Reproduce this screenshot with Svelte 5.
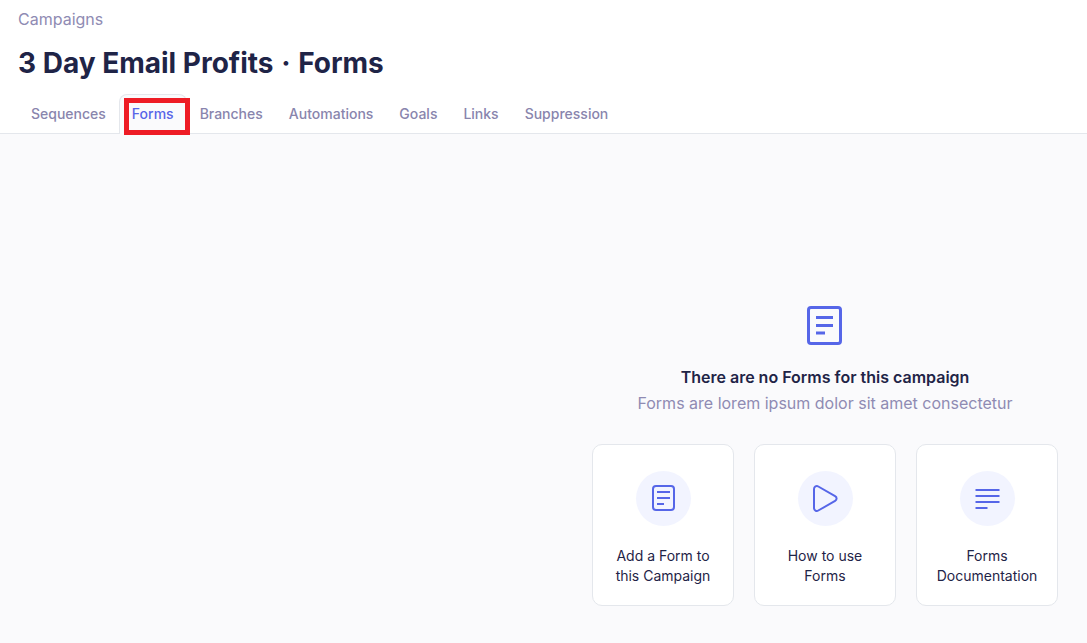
<script lang="ts">
  type Card = { icon: "form" | "play" | "docs"; lines: string[] };

  const tabs = [
    "Sequences",
    "Forms",
    "Branches",
    "Automations",
    "Goals",
    "Links",
    "Suppression",
  ];

  const cards: Card[] = [
    { icon: "form", lines: ["Add a Form to", "this Campaign"] },
    { icon: "play", lines: ["How to use", "Forms"] },
    { icon: "docs", lines: ["Forms", "Documentation"] },
  ];

  let active = $state("Forms");
</script>

<div class="page">
  <header>
    <a class="breadcrumb" href="#campaigns">Campaigns</a>
    <h1>3 Day Email Profits <span class="dot">·</span> Forms</h1>
    <nav>
      {#each tabs as tab}
        <a
          href={"#" + tab.toLowerCase()}
          class="tab"
          class:active={tab === active}
          onclick={() => (active = tab)}
        >
          {tab}
          {#if tab === "Forms"}
            <span class="marker"></span>
          {/if}
        </a>
      {/each}
    </nav>
  </header>

  <main>
    <section class="empty">
      <svg class="empty-icon" width="36" height="39" viewBox="0 0 36 39">
        <rect x="1.5" y="1.5" width="32" height="36" rx="2.5" />
        <path d="M9 11.5h17M9 19.5h17M9 27h9" />
      </svg>
      <h2>There are no Forms for this campaign</h2>
      <p>Forms are lorem ipsum dolor sit amet consectetur</p>

      <div class="cards">
        {#each cards as card}
          <button class="card">
            <span class="circle">
              <svg width="27" height="27" viewBox="0 0 27 27">
                {#if card.icon === "form"}
                  <rect x="3" y="1" width="21" height="24" rx="3" />
                  <path d="M7 7h13M7 13h13M7 19h7" />
                {:else if card.icon === "play"}
                  <path
                    d="M2 4v19c0 2.300 2.400 3.600 4.300 2.500l16.800-9.700c2-1.100 2-3.500 0-4.600L6.300 1.500C4.400.4 2 1.700 2 4z"
                  />
                {:else}
                  <path d="M1.500 5h24M1.500 11h24M1.500 17h24M1.500 23h12" />
                {/if}
              </svg>
            </span>
            <span class="label">
              {card.lines[0]}<br />{card.lines[1]}
            </span>
          </button>
        {/each}
      </div>
    </section>
  </main>
</div>

<style>
  :global(body) {
    margin: 0;
    background: #fafafc;
  }

  .page {
    min-height: 100vh;
    font-family: Inter, sans-serif;
    color: #1f2447;
  }

  header {
    padding: 7px 18px 0;
    background: #fff;
    border-bottom: 1px solid #e4e7ec;
  }

  .breadcrumb {
    display: block;
    width: fit-content;
    font-size: 16px;
    line-height: 24px;
    color: #8f8bb3;
    text-decoration: none;
  }

  h1 {
    margin: 13px 0 12px;
    font-size: 28px;
    line-height: 38px;
    font-weight: 700;
  }

  .dot {
    margin: 0 1px;
  }

  nav {
    display: flex;
    margin-bottom: -1px;
  }

  .tab {
    position: relative;
    padding: 9px 12px 10px;
    border: 1px solid transparent;
    border-bottom: none;
    border-radius: 8px 8px 0 0;
    font-size: 14px;
    line-height: 20px;
    font-weight: 500;
    color: #8985ad;
    text-decoration: none;
  }

  .tab.active {
    background: #fafafc;
    border-color: #e4e7ec;
    color: #5865e8;
  }

  /* red frame drawn over the tab */
  .marker {
    position: absolute;
    inset: 3px -4px -1px 4px;
    border: 5px solid #ee1c25;
    pointer-events: none;
  }

  main {
    display: flex;
    justify-content: flex-end;
    padding: 172px 29px 37px;
  }

  .empty {
    display: flex;
    flex-direction: column;
    align-items: center;
    text-align: center;
  }

  svg {
    fill: none;
    stroke: #5666e8;
    stroke-width: 2;
  }

  .empty-icon {
    stroke-width: 3;
  }

  h2 {
    margin: 19px 0 0;
    font-size: 16px;
    line-height: 26px;
    font-weight: 600;
  }

  p {
    margin: 0;
    font-size: 16px;
    line-height: 26px;
    color: #8f8bb3;
  }

  .cards {
    display: flex;
    gap: 20px;
    margin-top: 28px;
  }

  .card {
    display: flex;
    flex-direction: column;
    align-items: center;
    gap: 20px;
    width: 142px;
    padding: 26px 0 19px;
    background: #fff;
    border: 1px solid #e4e7ec;
    border-radius: 10px;
    font-family: inherit;
    color: inherit;
    cursor: pointer;
  }

  .circle {
    display: flex;
    align-items: center;
    justify-content: center;
    width: 55px;
    height: 55px;
    border-radius: 50%;
    background: #f2f4ff;
  }

  .label {
    font-size: 14px;
    line-height: 20px;
  }
</style>
